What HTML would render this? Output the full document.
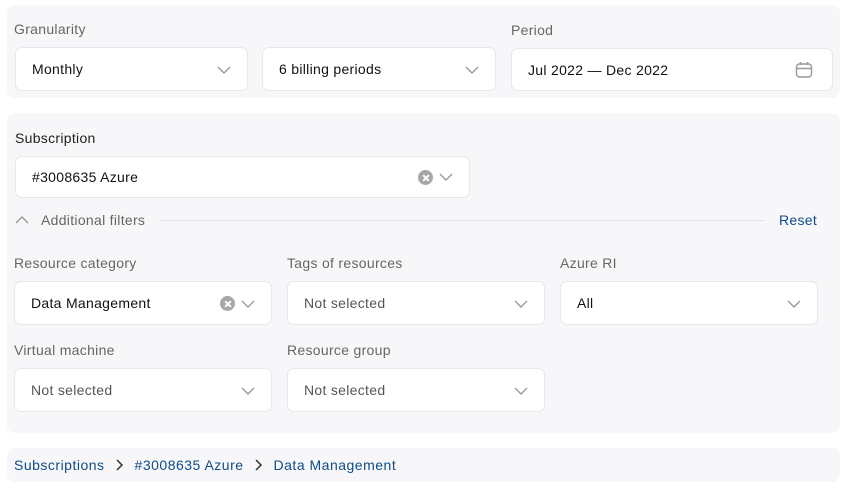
<!DOCTYPE html>
<html><head><meta charset="utf-8"><style>
*{box-sizing:border-box;margin:0;padding:0}
body{width:848px;height:490px;background:#fff;font-family:"Liberation Sans",sans-serif;font-size:14px;color:#111;position:relative;overflow:hidden;letter-spacing:0.3px}
.p{position:absolute;background:#f7f7f9;border-radius:8px}
.l{position:absolute;color:#666;font-size:14px}
.b{position:absolute;background:#fff;border:1px solid #e8e8ec;border-radius:7px;height:42px;display:flex;align-items:center;padding-left:16px}
.b.g{color:#555}
.ch{position:absolute;right:16px;top:15px}
.x{position:absolute;top:13px;width:15px;height:15px;border-radius:50%;background:#a7a7a7}
.x:before,.x:after{content:"";position:absolute;left:3.5px;top:6.5px;width:8px;height:2px;background:#fff;transform:rotate(45deg)}
.x:after{transform:rotate(-45deg)}
a{color:#0f4c8a;text-decoration:none}
</style></head><body>
<svg width="0" height="0" style="position:absolute"><defs><symbol id="c" viewBox="0 0 14 10"><path d="M1 2l6 6 6-6" fill="none" stroke="#999" stroke-width="1.4"/></symbol></defs></svg>
<div class="p" style="left:7px;top:5px;width:833px;height:93px"></div>
<div class="l" style="left:14px;top:21px">Granularity</div>
<div class="l" style="left:511px;top:22px">Period</div>
<div class="b" style="left:15px;top:47px;width:233px;height:44px">Monthly<svg class="ch" width="14" height="10" style="top:17px"><use href="#c"/></svg></div>
<div class="b" style="left:262px;top:47px;width:234px;height:44px">6 billing periods<svg class="ch" width="14" height="10" style="top:17px"><use href="#c"/></svg></div>
<div class="b" style="left:511px;top:48px;width:322px;height:43px">Jul 2022 — Dec 2022<svg style="position:absolute;right:19px;top:12px" width="18" height="18" viewBox="0 0 18 18"><rect x="1.5" y="3" width="15" height="13" rx="3" fill="none" stroke="#999" stroke-width="1.4"/><path d="M1.5 7.5h15M5.5 1v3M12.5 1v3" stroke="#999" stroke-width="1.4"/></svg></div>

<div class="p" style="left:7px;top:113px;width:833px;height:320px"></div>
<div class="l" style="left:15px;top:130px;color:#222">Subscription</div>
<div class="b" style="left:15px;top:156px;width:455px;height:42px">#3008635 Azure<div class="x" style="left:402px"></div><svg class="ch" width="14" height="10"><use href="#c"/></svg></div>
<svg style="position:absolute;left:15px;top:215px" width="14" height="10"><path d="M1 8l6-6 6 6" fill="none" stroke="#999" stroke-width="1.4"/></svg>
<div class="l" style="left:41px;top:212px">Additional filters</div>
<div style="position:absolute;left:159px;top:220px;width:605px;height:1px;background:#e0e0e4"></div>
<a style="position:absolute;left:779px;top:212px">Reset</a>

<div class="l" style="left:14px;top:255px">Resource category</div>
<div class="l" style="left:287px;top:255px">Tags of resources</div>
<div class="l" style="left:560px;top:255px">Azure RI</div>
<div class="b" style="left:14px;top:281px;width:258px;height:44px">Data Management<div class="x" style="left:205px;top:14px"></div><svg class="ch" width="14" height="10" style="top:17px"><use href="#c"/></svg></div>
<div class="b g" style="left:287px;top:281px;width:258px;height:44px">Not selected<svg class="ch" width="14" height="10" style="top:17px"><use href="#c"/></svg></div>
<div class="b" style="left:560px;top:281px;width:258px;height:44px">All<svg class="ch" width="14" height="10" style="top:17px"><use href="#c"/></svg></div>
<div class="l" style="left:14px;top:342px">Virtual machine</div>
<div class="l" style="left:287px;top:342px">Resource group</div>
<div class="b g" style="left:14px;top:368px;width:258px;height:44px">Not selected<svg class="ch" width="14" height="10" style="top:17px"><use href="#c"/></svg></div>
<div class="b g" style="left:287px;top:368px;width:258px;height:44px">Not selected<svg class="ch" width="14" height="10" style="top:17px"><use href="#c"/></svg></div>

<div class="p" style="left:7px;top:448px;width:833px;height:34px"></div>
<div style="position:absolute;left:14px;top:457px;display:flex;align-items:center;color:#0f4c8a;letter-spacing:0.5px">
<a>Subscriptions</a><svg width="30" height="12" viewBox="0 0 30 12"><path d="M12 1l5 5-5 5" fill="none" stroke="#333" stroke-width="1.5"/></svg>
<a>#3008635 Azure</a><svg width="30" height="12" viewBox="0 0 30 12"><path d="M12 1l5 5-5 5" fill="none" stroke="#333" stroke-width="1.5"/></svg>
<a>Data Management</a></div>
</body></html>
